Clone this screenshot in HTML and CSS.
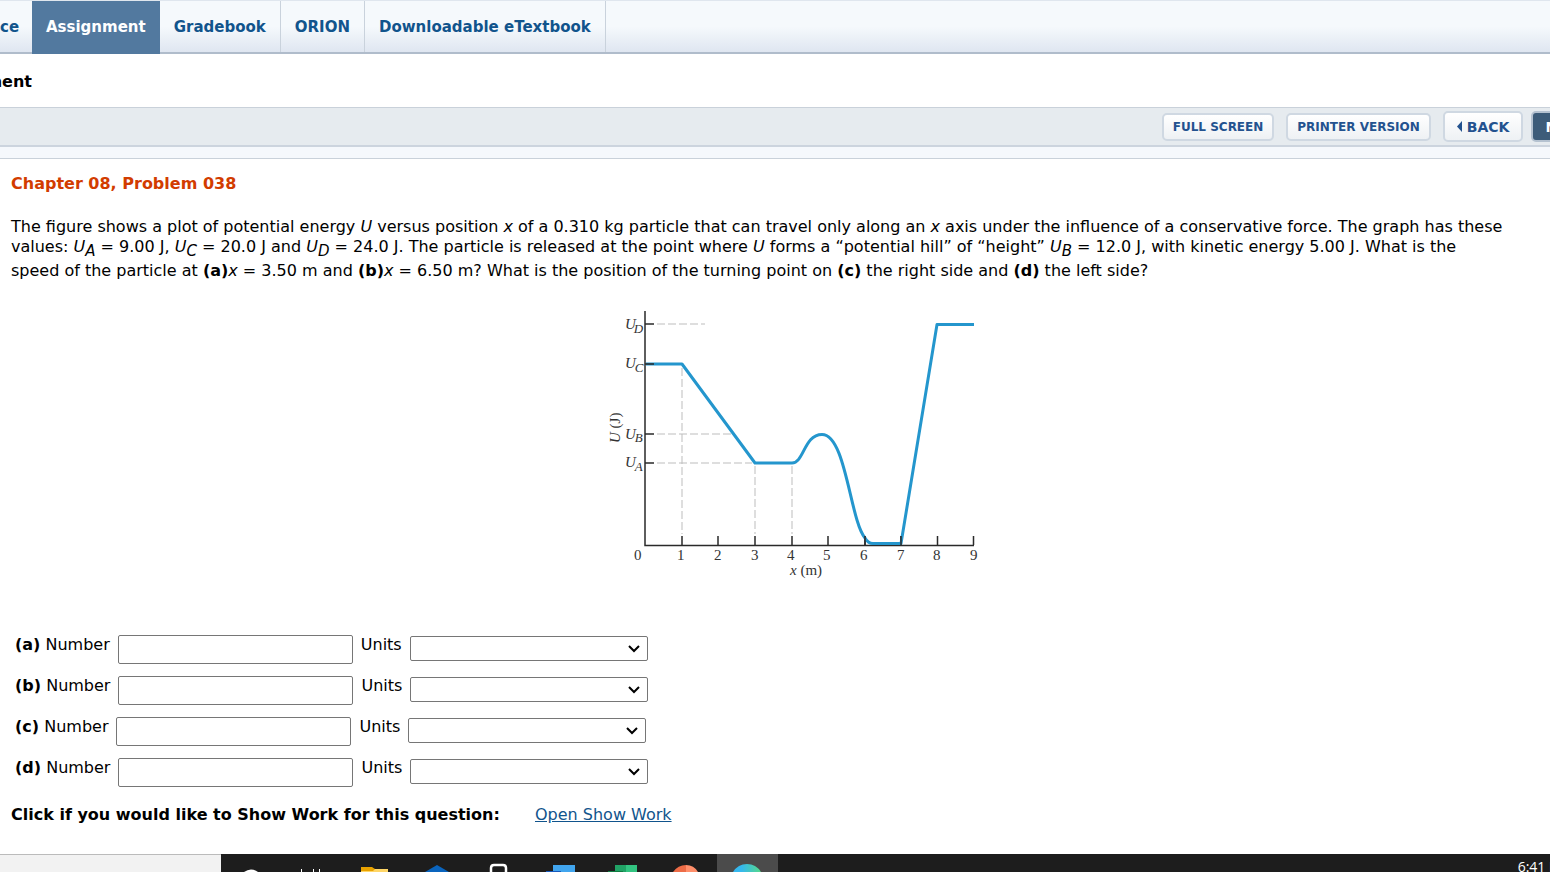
FILE: index.html
```html
<!DOCTYPE html>
<html lang="en">
<head>
  <meta charset="UTF-8">
  <meta name="viewport" content="width=device-width, initial-scale=1.0">
  <title>Chapter 08, Problem 038</title>
  <link rel="stylesheet" href="styles.css">
</head>
<body>
  <nav class="tabs">
    <a class="tab tab-cut" href="#">ce</a>
    <a class="tab active" href="#">Assignment</a>
    <a class="tab" href="#">Gradebook</a>
    <a class="tab" href="#">ORION</a>
    <a class="tab" href="#">Downloadable eTextbook</a>
  </nav>

  <div class="page-title"><span>ment</span></div>

  <div class="toolbar">
    <button type="button" class="btn">FULL SCREEN</button>
    <button type="button" class="btn">PRINTER VERSION</button>
    <button type="button" class="btn btn-nav">
      <svg width="5" height="11" viewBox="0 0 5 11" aria-hidden="true"><path d="M5 0v11L0 5.5z" fill="#23528f"/></svg>
      BACK
    </button>
    <button type="button" class="btn btn-nav btn-next">NEXT</button>
  </div>
  <div class="strip"></div>

  <main class="content">
    <h1>Chapter 08, Problem 038</h1>
    <p class="problem">
      The figure shows a plot of potential energy <i>U</i> versus position <i>x</i> of a 0.310 kg particle that can travel only along an <i>x</i> axis under the influence of a conservative force. The graph has these<br>
      values: <i>U<sub>A</sub></i> = 9.00 J, <i>U<sub>C</sub></i> = 20.0 J and <i>U<sub>D</sub></i> = 24.0 J. The particle is released at the point where <i>U</i> forms a “potential hill” of “height” <i>U<sub>B</sub></i> = 12.0 J, with kinetic energy 5.00 J. What is the<br>
      speed of the particle at <b>(a)</b><i>x</i> = 3.50 m and <b>(b)</b><i>x</i> = 6.50 m? What is the position of the turning point on <b>(c)</b> the right side and <b>(d)</b> the left side?
    </p>

    <svg class="plot" width="430" height="290" viewBox="560 300 430 290" role="img" aria-label="Potential energy versus position">
      <!-- guide lines -->
      <g class="guides">
        <path d="M657 324H705M657 434H732M657 463H752" />
        <path d="M682 368V534M755 466V534M792 466V534" />
      </g>
      <!-- axes and ticks -->
      <path class="axes" d="M645 311V545.500H974M645 324H654M645 434H654M645 463H654M682 545V536M718 545V536M755 545V536M792 545V536M828 545V536M865 545V536M901 545V536M937.500 545V536M973.500 545V536" />
      <!-- potential energy curve -->
      <path class="curve" d="M646 364H682L755 463H792C804 463 804 434.500 822 434.500C846 434.500 850 520 865 538Q868 543.500 873 543.500H901L937 324.500H974" />
      <path class="axes" d="M645 364H654M865 545V536M901 545V536" />
      <g class="plot-text">
        <text x="625" y="329" class="var">U<tspan dx="-2" dy="4" class="idx">D</tspan></text>
        <text x="625" y="368" class="var">U<tspan dx="-1" dy="4" class="idx">C</tspan></text>
        <text x="625" y="439" class="var">U<tspan dx="-1" dy="3" class="idx">B</tspan></text>
        <text x="625" y="467" class="var">U<tspan dx="-1" dy="4" class="idx">A</tspan></text>
        <text transform="translate(620 443) rotate(-90)"><tspan class="var">U</tspan> (J)</text>
        <text x="634" y="560">0</text>
        <text x="677" y="560">1</text>
        <text x="714" y="560">2</text>
        <text x="751" y="560">3</text>
        <text x="787" y="560">4</text>
        <text x="823" y="560">5</text>
        <text x="860" y="560">6</text>
        <text x="897" y="560">7</text>
        <text x="933" y="560">8</text>
        <text x="970" y="560">9</text>
        <text x="790" y="575"><tspan class="var">x</tspan> (m)</text>
      </g>
    </svg>

    <form class="answers">
      <div class="answer">
        <label for="numA"><b>(a)</b> Number</label>
        <input type="text" id="numA">
        <label for="unitA">Units</label>
        <select id="unitA"><option></option></select>
      </div>
      <div class="answer">
        <label for="numB"><b>(b)</b> Number</label>
        <input type="text" id="numB">
        <label for="unitB">Units</label>
        <select id="unitB"><option></option></select>
      </div>
      <div class="answer">
        <label for="numC"><b>(c)</b> Number</label>
        <input type="text" id="numC">
        <label for="unitC">Units</label>
        <select id="unitC"><option></option></select>
      </div>
      <div class="answer">
        <label for="numD"><b>(d)</b> Number</label>
        <input type="text" id="numD">
        <label for="unitD">Units</label>
        <select id="unitD"><option></option></select>
      </div>
    </form>

    <p class="show-work"><b>Click if you would like to Show Work for this question:</b> <a href="#">Open Show Work</a></p>
  </main>

  <footer class="taskbar">
    <div class="search"></div>
    <svg class="apps" width="560" height="18" viewBox="221 854 560 18" aria-hidden="true">
      <defs>
        <linearGradient id="edge"><stop offset="0.3" stop-color="#35b8ee"/><stop offset="1" stop-color="#55d98a"/></linearGradient>
      </defs>
      <rect x="717" y="854" width="61" height="18" fill="#4b4b4b"/>
      <path d="M244 872q7-5 14 0z" fill="#fff"/>
      <path d="M301.500 869v3M313.500 869v3M319.500 869v3" stroke="#fff"/>
      <path d="M374 869h14v3h-27v-1h11z" fill="#ffd667"/>
      <path d="M361 867h11l3 2-2 2h-12z" fill="#e8a200"/>
      <path d="M425 872l12-7 12 7z" fill="#0a64bd"/>
      <path d="M491 872v-4q0-3 3-3h9q3 0 3 3v4" fill="none" stroke="#fff" stroke-width="2.500"/>
      <path d="M553 865h22v7h-22z" fill="#41a5ee"/>
      <path d="M546 871h15v1h-15z" fill="#185abd"/>
      <path d="M615 865h11v7h-11z" fill="#21a366"/>
      <path d="M626 865h11v7h-11z" fill="#33c481"/>
      <path d="M608 871h15v1h-15z" fill="#107c41"/>
      <path d="M673 872q5-7 13-7v7z" fill="#ed6c47"/>
      <path d="M686 865q8 0 12 7h-12z" fill="#ff8f6b"/>
      <path d="M733 872q5-8 14-8t14 8z" fill="url(#edge)"/>
    </svg>
    <div class="clock">6:41 PM</div>
  </footer>
</body>
</html>
```
FILE: styles.css
```css
* { box-sizing: border-box; margin: 0; padding: 0; }
body {
  font-family: Verdana, "DejaVu Sans", sans-serif;
  font-size: 16px;
  background: #fff;
  color: #000;
  min-height: 100vh;
  display: flex;
  flex-direction: column;
  overflow: hidden;
}
/* Tabs */
.tabs {
  display: flex;
  height: 54px;
  border-top: 1px solid #dfe6ee;
  border-bottom: 2px solid #b0bccb;
  background: linear-gradient(#f5f9fc 50%, #dfe6f1);
}
.tab {
  height: 51px;
  padding: 0 14px;
  border-right: 1px solid #c9d2dc;
  line-height: 52px;
  font-size: 15px;
  font-weight: bold;
  color: #11548c;
  text-decoration: none;
  white-space: nowrap;
}
.tab-cut { width: 32px; padding: 0; border: none; }
.tab.active {
  height: 53px;
  border: none;
  background: #52799f;
  color: #fff;
}
.page-title {
  height: 53px;
  line-height: 55px;
  font-weight: bold;
}
.page-title span {
  display: flex;
  justify-content: flex-end;
  width: 32px;
  overflow: hidden;
}
/* Toolbar */
.toolbar {
  display: flex;
  justify-content: flex-end;
  align-items: center;
  gap: 12px;
  height: 40px;
  margin-right: -51px;
  background: #e6ebef;
  border-top: 1px solid #c9d1da;
  border-bottom: 2px solid #ccd4de;
}
.btn {
  height: 28px;
  padding: 0 9px;
  border: 2px solid #cfd8e2;
  border-radius: 5px;
  background: linear-gradient(#fff, #eef1f4);
  font: bold 12px Verdana, "DejaVu Sans", sans-serif;
  color: #23528f;
  white-space: nowrap;
}
.btn-nav {
  display: flex;
  align-items: center;
  gap: 5px;
  height: 31px;
  padding: 0 12px;
  font-size: 14px;
}
.btn-next {
  margin-left: -4px;
  background: #3d5c79;
  border-color: #b5c2d0;
  color: #fff;
}
.strip {
  height: 12px;
  background: #f5f8fc;
  border-bottom: 1px solid #c9d1da;
}
/* Problem */
.content { flex: 1; padding: 15px 11px 0; }
h1 { font-size: 16px; line-height: 20px; color: #d23c00; }
.problem { margin-top: 23px; line-height: 20px; white-space: nowrap; }
.problem sub { font-size: 15px; }
.plot { display: block; margin: 19px auto 0; }
.guides { fill: none; stroke: #bdbdbd; stroke-width: 1; stroke-dasharray: 8 3; }
.curve { fill: none; stroke: #2496cd; stroke-width: 3; stroke-linejoin: round; }
.axes { fill: none; stroke: #2a2a2a; stroke-width: 1.500; }
.plot-text { font: 15px "Liberation Serif", serif; fill: #333; }
.var { font-style: italic; }
.idx { font-size: 13px; }
/* Answers */
.answers { margin-top: 45px; padding-left: 4px; }
.answer { display: flex; align-items: flex-start; gap: 8px; height: 41px; }
.answer label { line-height: 20px; }
.answer input {
  width: 235px;
  height: 29px;
  border: 1px solid #767676;
  border-radius: 2px;
}
.answer select {
  width: 238px;
  height: 25px;
  margin-top: 1px;
  border: 1px solid #767676;
  border-radius: 2px;
  appearance: none;
  background: #fff url("data:image/svg+xml,%3Csvg xmlns='http://www.w3.org/2000/svg' width='12' height='8'%3E%3Cpath d='M1 1l5 5 5-5' fill='none' stroke='black' stroke-width='2'/%3E%3C/svg%3E") no-repeat right 7px center;
}
.show-work { margin-top: 6px; line-height: 20px; }
.show-work a { margin-left: 30px; color: #11548c; }
/* Taskbar */
.taskbar {
  display: flex;
  height: 18px;
  background: #1d1d1d;
  overflow: hidden;
}
.search { width: 221px; background: #f2f2f2; border-top: 1px solid #bbb; }
.clock {
  margin-left: auto;
  margin-right: -20px;
  padding-top: 3px;
  font: 14px "Open Sans", sans-serif;
  color: #fff;
}
```
